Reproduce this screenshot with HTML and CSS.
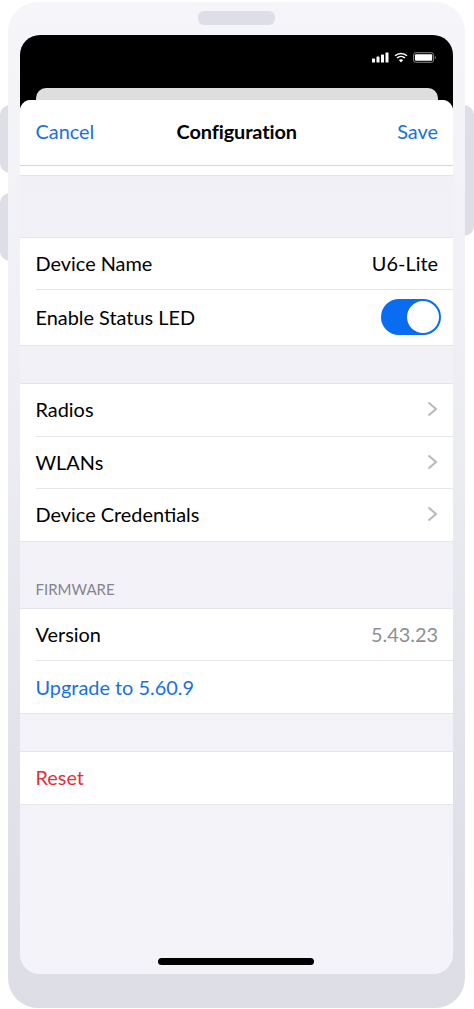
FILE: index.html
```html
<!DOCTYPE html>
<html lang="en">
<head>
<meta charset="utf-8">
<title>Configuration</title>
<link rel="stylesheet" href="styles.css">
</head>
<body>
<div class="device">
  <span class="side-btn left-a"></span>
  <span class="side-btn left-b"></span>
  <span class="side-btn right-a"></span>
  <div class="phone">
    <div class="speaker"></div>
    <div class="screen">
      <div class="status">
        <div class="status-icons">
          <svg class="i-signal" width="17" height="11" viewBox="0 0 17 11"><rect x="0" y="6.500" width="3" height="4" rx=".6"/><rect x="4.500" y="4.500" width="3" height="6" rx=".6"/><rect x="9" y="2.500" width="3" height="8" rx=".6"/><rect x="13.500" y="0.500" width="3" height="10" rx=".6"/></svg>
          <svg class="i-wifi" width="14" height="11" viewBox="0 0 14 11" fill="none"><path d="M1 3.800C4.400.6 9.600.6 13 3.800M3 6C5.300 3.900 8.700 3.900 11 6" stroke="#fff" stroke-width="1.500"/><path d="M7 10.500 4.800 8.100C6 7 8 7 9.200 8.100Z" fill="#fff"/></svg>
          <svg class="i-batt" width="23" height="11" viewBox="0 0 24 11"><rect x=".5" y=".5" width="21" height="10" rx="2.500" fill="none" stroke="#8a8a8a"/><rect x="2" y="2" width="18" height="7" rx="1.200" fill="#fff"/><path d="M22.800 3.800c.7.3 1 .9 1 1.700s-.3 1.400-1 1.700Z" fill="#8a8a8a"/></svg>
        </div>
        <div class="peek"></div>
      </div>
      <div class="sheet">
        <header class="nav">
          <span class="link">Cancel</span>
          <strong class="title">Configuration</strong>
          <span class="link nav-end">Save</span>
        </header>
        <div class="sliver"></div>
        <section class="group gap-62">
          <div class="row row-short"><span>Device Name</span><span>U6-Lite</span></div>
          <div class="row row-toggle"><span>Enable Status LED</span><span class="toggle"><span class="knob"></span></span></div>
        </section>
        <section class="group gap-38">
          <div class="row"><span>Radios</span><svg class="chev" width="11" height="16" viewBox="0 0 11 16"><path d="M1.500 1.500 9 8l-7.500 6.500" /></svg></div>
          <div class="row"><span>WLANs</span><svg class="chev" width="11" height="16" viewBox="0 0 11 16"><path d="M1.500 1.500 9 8l-7.500 6.500" /></svg></div>
          <div class="row"><span>Device Credentials</span><svg class="chev" width="11" height="16" viewBox="0 0 11 16"><path d="M1.500 1.500 9 8l-7.500 6.500" /></svg></div>
        </section>
        <h2 class="section-label">FIRMWARE</h2>
        <section class="group">
          <div class="row"><span>Version</span><span class="muted">5.43.23</span></div>
          <div class="row"><span class="link">Upgrade to 5.60.9</span></div>
        </section>
        <section class="group gap-38">
          <div class="row"><span class="danger">Reset</span></div>
        </section>
        <div class="home"></div>
      </div>
    </div>
  </div>
</div>
</body>
</html>
```
FILE: styles.css
```css
* { box-sizing: border-box; }
html, body { margin: 0; padding: 0; background: #fff; }
body { font-family: Lato, "Open Sans", sans-serif; color: #000; }
.device { position: relative; width: 474px; height: 1009px; overflow: hidden; }
.side-btn { position: absolute; background: #dddee6; width: 20px; }
.left-a { left: 0; top: 105px; height: 68px; border-radius: 10px 0 0 10px; }
.left-b { left: 0; top: 193px; height: 68px; border-radius: 10px 0 0 10px; }
.right-a { right: 0; top: 105px; height: 131px; border-radius: 0 10px 10px 0; }
.phone {
  position: relative;
  margin: 2px 9px 0 8px;
  height: 1006px;
  padding: 9px 12px 0;
  border-radius: 30px;
  background: linear-gradient(#f5f5fa 0, #f0f0f6 30%, #e2e2ea 75%, #dcdde5 100%);
  display: flex;
  flex-direction: column;
}
.speaker { align-self: center; width: 77px; height: 14px; border-radius: 6px; background: #dddee6; flex: none; }
.screen {
  margin-top: 10px;
  height: 939px;
  border-radius: 20px;
  background: linear-gradient(#000 120px, #f2f2f8 120px);
  overflow: hidden;
  display: flex;
  flex-direction: column;
}
.status { height: 65px; padding: 16px 15px 0 16px; flex: none; display: flex; flex-direction: column; }
.status-icons { display: flex; justify-content: flex-end; align-items: center; gap: 5px; height: 13px; margin-right: 2px; }
.i-signal { fill: #fff; }
.peek { margin-top: auto; height: 12px; background: #dedede; border-radius: 10px 10px 0 0; }
.sheet {
  flex: 1;
  position: relative;
  background: linear-gradient(#f0f0f6, #f3f3f9);
  border-radius: 11px 11px 0 0;
  overflow: hidden;
}
.nav {
  height: 66px;
  padding: 0 15px 3px 15.500px;
  background: #fff;
  border-bottom: 1px solid #d6d6dc;
  display: grid;
  grid-template-columns: 1fr auto 1fr;
  align-items: center;
  font-size: 19.900px;
}
.nav-end { justify-self: end; }
.title { font-weight: 700; font-size: 19.900px; letter-spacing: -0.1px; }
.link { color: #1a6fe0; }
.sliver { height: 10px; background: #fff; border-bottom: 1px solid #e4e4ea; }
.group { background: #fff; border-top: 1px solid #e4e4ea; }
.gap-62 { margin-top: 61px; }
.gap-38 { margin-top: 37px; }
.row {
  height: 52.600px;
  margin-left: 15.500px;
  padding-right: 15px;
  padding-bottom: 1px;
  border-bottom: 1px solid #e6e6ea;
  display: flex;
  justify-content: space-between;
  align-items: center;
  font-size: 19.900px;
}
.row:last-child { margin-left: 0; padding-left: 15.500px; }
.row-short { height: 52px; }
.row-toggle { height: 56px; padding-bottom: 2px; }
.chev { fill: none; stroke: #b9b9bd; stroke-width: 2; }
.muted { color: #8e8e93; }
.danger { color: #e0303e; }
.section-label {
  margin: 38px 0 0;
  padding: 0 15.500px 10px;
  font-size: 15px;
  line-height: 18px;
  font-weight: 400;
  color: #85858a;
}
.toggle {
  width: 60px;
  height: 36px;
  margin-right: -3px;
  padding: 2px;
  border-radius: 18px;
  background: #0a6cf0;
  display: flex;
  justify-content: flex-end;
}
.knob { width: 32px; height: 32px; border-radius: 50%; background: #fff; }
.home {
  position: absolute;
  left: 138px;
  bottom: 9px;
  width: 156px;
  height: 7px;
  border-radius: 4px;
  background: #000;
}
```
